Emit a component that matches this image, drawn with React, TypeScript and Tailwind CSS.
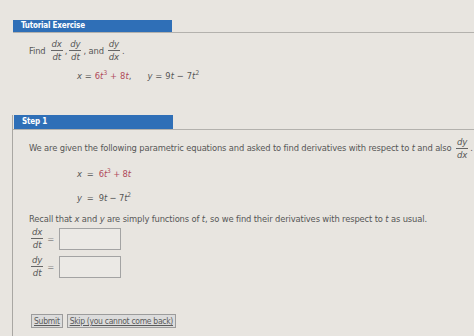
import React from "react";

function Frac({ n, d }: { n: string; d: string }) {
  return (
    <span className="inline-flex flex-col items-center align-middle mx-[2px] leading-[10px] italic text-[9.5px]">
      <span className="px-[1px]">{n}</span>
      <span className="block w-full h-px bg-[#666] my-[1px]" />
      <span className="px-[1px]">{d}</span>
    </span>
  );
}

const Red = ({ children }: { children: React.ReactNode }) => (
  <span className="text-[#b04a5a]">{children}</span>
);

const Sup = ({ children }: { children: React.ReactNode }) => (
  <span className="text-[6.5px] not-italic align-[4px] leading-none">{children}</span>
);

export default function App() {
  return (
    <div className="w-[474px] h-[336px] overflow-hidden bg-[#e8e5e0] text-[#565656] font-['DejaVu_Sans_Condensed','DejaVu_Sans',sans-serif] text-[9.3px] tracking-[-0.14px]">
      <div className="pt-[20px]">
        {/* Tutorial header */}
        <div className="ml-[13px] flex items-end border-b border-[#b3b1ad]">
          <div className="w-[159px] h-[12px] bg-[#2f6fb7] text-white font-bold text-[8px] leading-[12px] pl-[8px] tracking-[-0.2px]">
            Tutorial Exercise
          </div>
        </div>
        <div className="pl-[29px] pt-[7px] h-[82px]">
          <div className="flex items-center h-[21px]">
            <span>Find</span>
            <span className="ml-[3px]"><Frac n="dx" d="dt" /></span>
            <span>,</span>
            <Frac n="dy" d="dt" />
            <span>, and</span>
            <span className="ml-[2px]"><Frac n="dy" d="dx" /></span>
            <span>.</span>
          </div>
          <div className="pl-[48px] mt-[8px] h-[14px] leading-[14px] whitespace-pre tracking-[0.1px]">
            <span className="italic">x</span>
            <span> = </span>
            <Red>
              6<span className="italic">t</span>
              <Sup>3</Sup> + 8<span className="italic">t</span>
            </Red>
            <span>,</span>
            <span className="ml-[16px] italic">y</span>
            <span> = 9</span>
            <span className="italic">t</span>
            <span> − 7</span>
            <span className="italic">t</span>
            <Sup>2</Sup>
          </div>
        </div>

        {/* Step 1 */}
        <div className="ml-[12px] border-l border-[#a9a7a3] h-[230px]">
          <div className="flex items-end border-b border-[#b3b1ad]">
            <div className="ml-px w-[159px] h-[14px] bg-[#2f6fb7] text-white font-bold text-[8px] leading-[14px] pl-[8px] tracking-[-0.2px]">
              Step 1
            </div>
          </div>
          <div className="pl-[16px]">
            <div className="flex items-center h-[22px] mt-[7px] whitespace-pre">
              <span>We are given the following parametric equations and asked to find derivatives with respect to </span>
              <span className="italic">t</span>
              <span> and also </span>
              <Frac n="dy" d="dx" />
              <span>.</span>
            </div>
            <div className="pl-[48px] mt-[8px] h-[14px] leading-[14px] whitespace-pre">
              <span className="italic">x</span>
              <span>  =  </span>
              <Red>
                6<span className="italic">t</span>
                <Sup>3</Sup> + 8<span className="italic">t</span>
              </Red>
            </div>
            <div className="pl-[48px] mt-[10px] h-[14px] leading-[14px] whitespace-pre">
              <span className="italic">y</span>
              <span>  =  9</span>
              <span className="italic">t</span>
              <span> − 7</span>
              <span className="italic">t</span>
              <Sup>2</Sup>
            </div>
            <div className="mt-[7px] h-[14px] leading-[14px] whitespace-pre">
              <span>Recall that </span>
              <span className="italic">x</span>
              <span> and </span>
              <span className="italic">y</span>
              <span> are simply functions of </span>
              <span className="italic">t</span>
              <span>, so we find their derivatives with respect to </span>
              <span className="italic">t</span>
              <span> as usual.</span>
            </div>
            <div className="mt-[1px] flex items-center h-[23px]">
              <Frac n="dx" d="dt" />
              <span className="ml-[2px] text-[#888]">=</span>
              <div className="ml-[5px] w-[62px] h-[22px] border border-[#a3a3a3] bg-[#ebe9e5]" />
            </div>
            <div className="mt-[5px] flex items-center h-[23px]">
              <Frac n="dy" d="dt" />
              <span className="ml-[2px] text-[#888]">=</span>
              <div className="ml-[5px] w-[62px] h-[22px] border border-[#a3a3a3] bg-[#ebe9e5]" />
            </div>
            <div className="mt-[36px] flex items-center gap-[4px] ml-[2px]">
              <button className="h-[14px] px-[2px] border border-[#9c9c9c] bg-[#dcdcdc] text-[#5a5a5a] text-[8.5px] leading-[12px] underline tracking-[-0.25px]">
                Submit
              </button>
              <button className="h-[14px] px-[2px] border border-[#9c9c9c] bg-[#dcdcdc] text-[#5a5a5a] text-[8.5px] leading-[12px] underline tracking-[-0.3px]">
                Skip (you cannot come back)
              </button>
            </div>
          </div>
        </div>
      </div>
    </div>
  );
}
